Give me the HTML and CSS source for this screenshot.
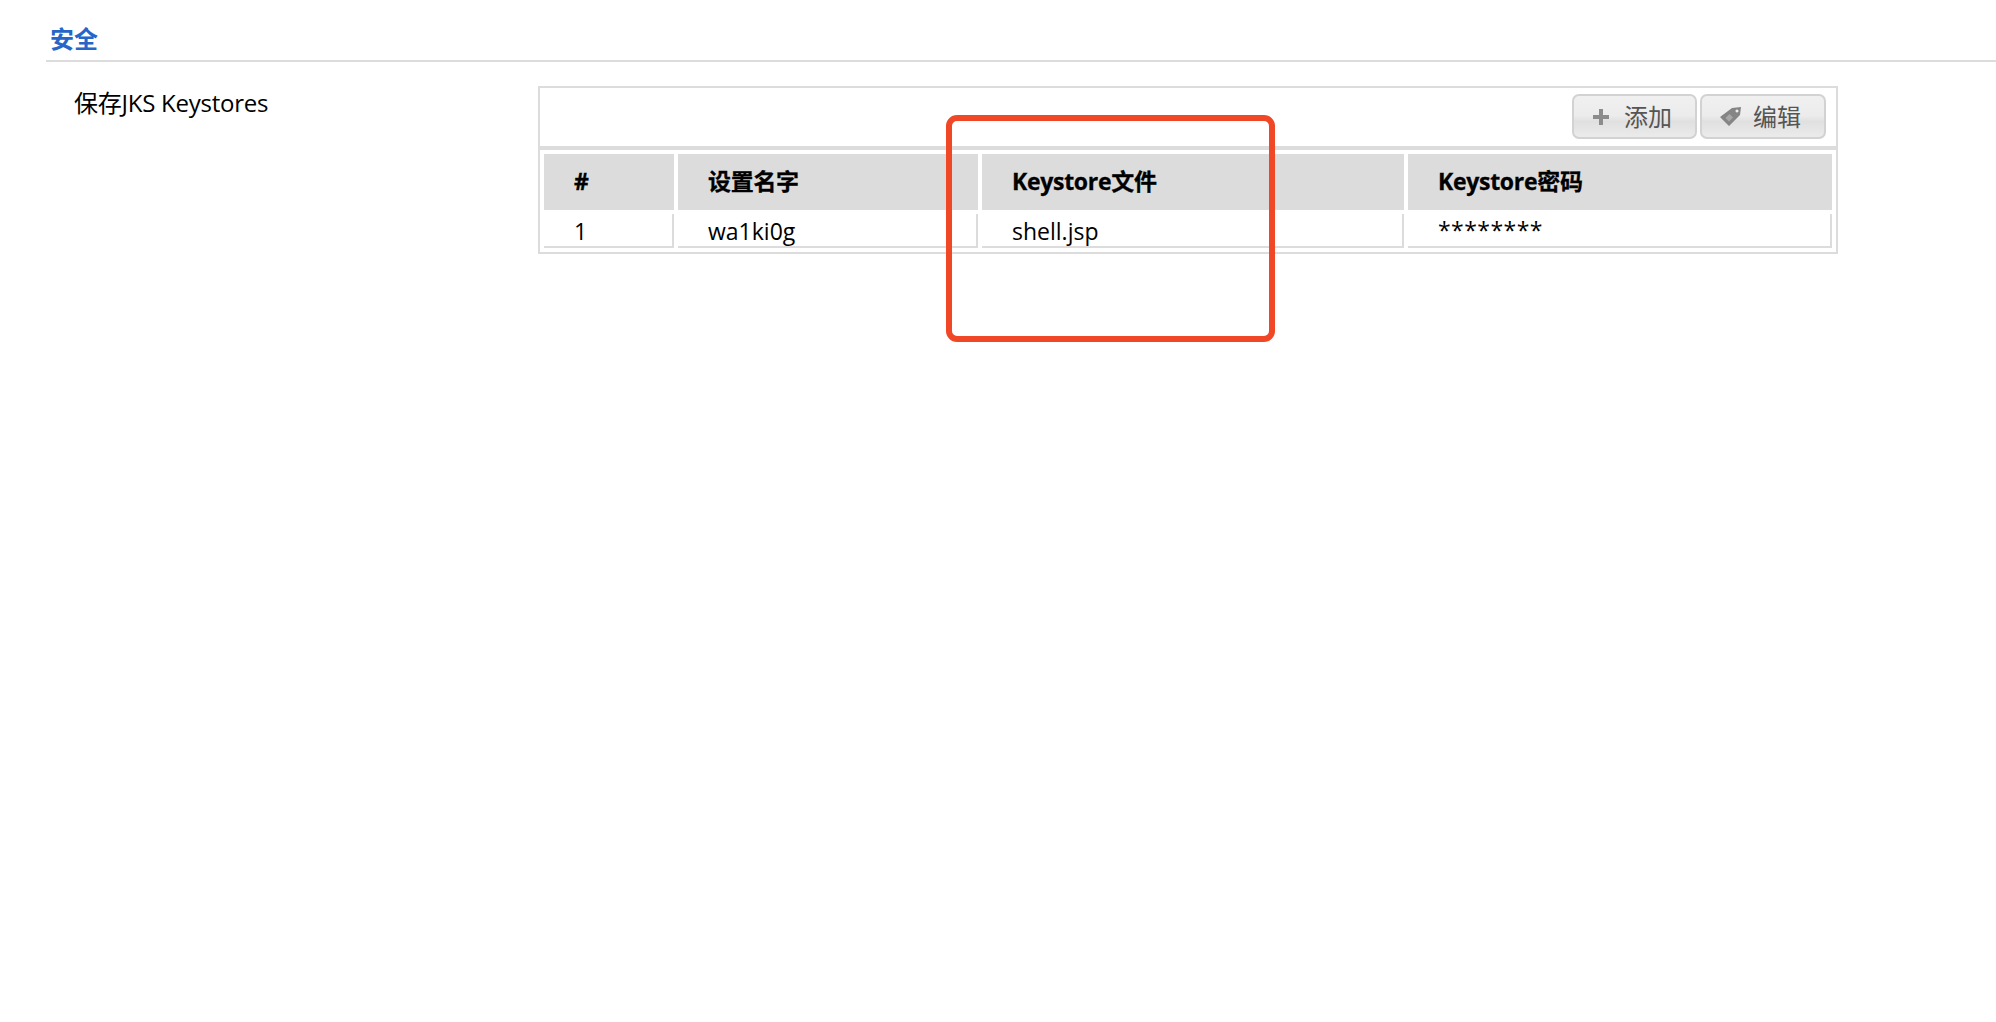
FILE: index.html
```html
<!DOCTYPE html>
<html lang="zh">
<head>
<meta charset="utf-8">
<title>安全</title>
<link rel="stylesheet" href="styles.css">
</head>
<body>
<h2 class="section-title"><span>安全</span></h2>
<div class="setting">
  <div class="setting-label">保存JKS Keystores</div>
  <div class="panel">
    <div class="toolbar">
      <button class="btn btn-add" type="button">
        <svg class="icon" width="16" height="16" viewBox="0 0 16 16"><path d="M6 0h4v6h6v4h-6v6H6v-6H0V6h6z" fill="#8c8c8c"/></svg>
        <span>添加</span>
      </button>
      <button class="btn btn-edit" type="button">
        <svg class="icon" width="22" height="22" viewBox="0 0 22 22"><path d="M12 2 21 1 20 9 9 20 0 11z M17 3.500a1.500 1.500 0 1 0 .01 0z" fill="#858585" fill-rule="evenodd"/><path d="M9.500 8 5.500 12 9 15.500 13 11.500z" fill="#a8a8a8"/></svg>
        <span>编辑</span>
      </button>
    </div>
    <table class="grid">
      <colgroup><col class="c1"><col class="c2"><col class="c3"><col class="c4"></colgroup>
      <thead>
        <tr><th>#</th><th>设置名字</th><th>Keystore文件</th><th>Keystore密码</th></tr>
      </thead>
      <tbody>
        <tr><td>1</td><td>wa1ki0g</td><td>shell.jsp</td><td class="mask">********</td></tr>
      </tbody>
    </table>
  </div>
</div>
<div class="callout"></div>
</body>
</html>
```
FILE: styles.css
```css
* { box-sizing: border-box; }
html, body { margin: 0; background: #fff; }
body {
  position: relative;
  height: 1022px;
  overflow: hidden;
  font-family: "Open Sans", "Noto Sans CJK SC", sans-serif;
  color: #000;
}
.section-title {
  margin: 0 0 0 46px;
  height: 62px;
  padding: 21px 0 0 4px;
  border-bottom: 2px solid #dcdcdc;
  font-size: 24px;
  line-height: 36px;
  font-weight: 700;
  color: #2566c8;
}
.section-title span { display: block; }
.setting { display: flex; padding: 24px 0 0 74px; }
.setting-label { width: 464px; font-size: 24px; line-height: 34px; letter-spacing: -0.25px; }
.panel { width: 1300px; border: 2px solid #dcdcdc; }
.toolbar {
  display: flex;
  justify-content: flex-end;
  gap: 3px;
  height: 62px;
  padding: 6px 10px 0 0;
  border-bottom: 4px solid #dcdcdc;
}
.btn {
  display: flex;
  align-items: center;
  height: 45px;
  padding: 0 0 2px;
  border: 2px solid #d2d2d2;
  border-radius: 7px;
  background: linear-gradient(#f0f0f0 0, #ececec 48%, #e0e0e0 62%, #ebebeb 100%);
  font: 24px "Noto Sans CJK SC", sans-serif;
  color: #555;
}
.icon { flex: none; margin-top: 2px; }
.btn-add { width: 125px; padding-left: 19px; gap: 15px; }
.btn-edit { width: 126px; padding-left: 18px; gap: 11px; }
.grid { width: 1296px; table-layout: fixed; border-collapse: separate; border-spacing: 4px; }
.c1 { width: 130px; } .c2 { width: 300px; } .c3 { width: 422px; } .c4 { width: 424px; }
.grid th {
  height: 56px;
  padding: 0 0 3px 30px;
  background: #dcdcdc;
  text-align: left;
  font-size: 23px;
  line-height: 30px;
  font-weight: 700;
  letter-spacing: -0.3px;
  -webkit-text-stroke: 0.3px #000;
}
.grid td {
  height: 34px;
  padding: 2px 0 0 30px;
  border-right: 2px solid #dcdcdc;
  border-bottom: 2px solid #dcdcdc;
  font-size: 23px;
  line-height: 30px;
}
.grid .mask { padding-top: 0; letter-spacing: 0.45px; }
.callout {
  position: absolute;
  left: 946px;
  top: 115px;
  width: 329px;
  height: 227px;
  border: 6px solid #f04726;
  border-radius: 11px;
}
```
